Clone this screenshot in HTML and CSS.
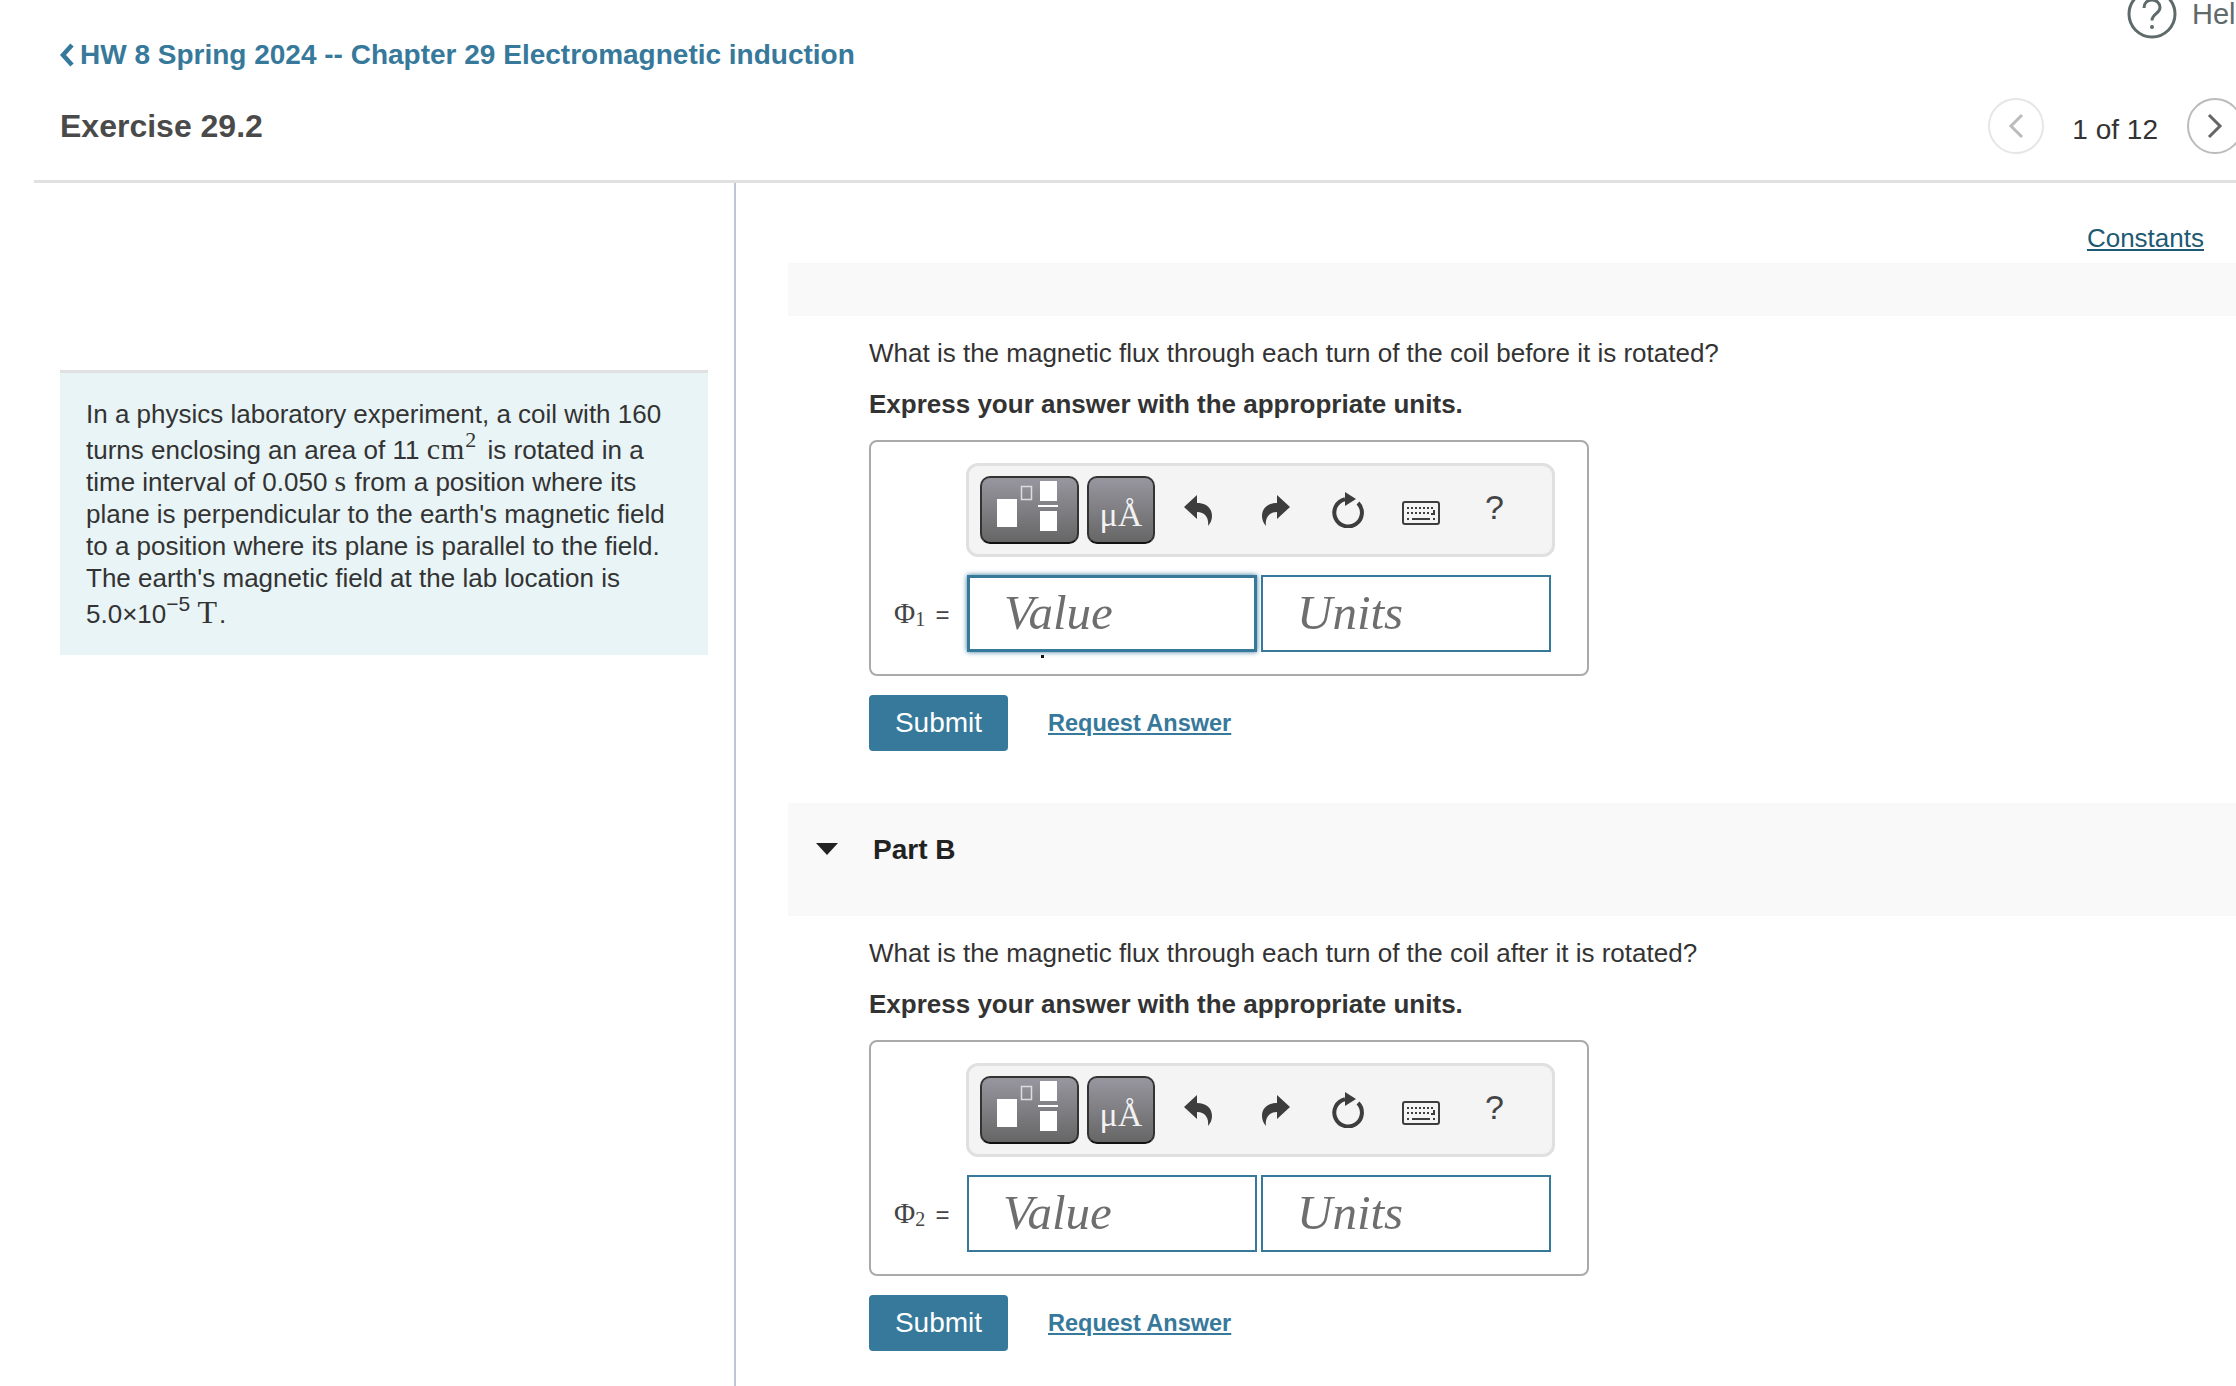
FILE: index.html
```html
<!DOCTYPE html>
<html lang="en">

<head>
  <meta charset="UTF-8">
  <title>Exercise 29.2</title>
  <link rel="stylesheet" href="styles.css">
</head>

<body>
  <div class="help-bar">
    <svg class="help-icon" width="50" height="50" viewBox="0 0 50 50">
      <circle cx="25" cy="25" r="23" fill="none" stroke="#5f6a6a" stroke-width="3" />
      <path d="M17 19c0-5 3.500-8 8-8s8 3 8 7.500c0 6-8 6.500-8 13" fill="none" stroke="#5f6a6a" stroke-width="3" />
      <circle cx="25" cy="38" r="2" fill="#5f6a6a" />
    </svg>
    <span class="help-text">Help</span>
  </div>

  <a class="back-link" href="#">
    <svg width="16" height="24" viewBox="0 0 16 24">
      <polyline points="13,2 4,12 13,22" fill="none" stroke="#37799b" stroke-width="4.500" />
    </svg>HW 8 Spring 2024 -- Chapter 29 Electromagnetic induction
  </a>

  <header class="title-row">
    <h1>Exercise 29.2</h1>
    <nav class="pager">
      <span class="pager-btn off">
        <svg width="16" height="26" viewBox="0 0 16 26"><polyline points="14,2 3,13 14,24" fill="none" stroke="#bbb" stroke-width="3" /></svg>
      </span>
      <span class="pager-count">1 of 12</span>
      <span class="pager-btn">
        <svg width="16" height="26" viewBox="0 0 16 26"><polyline points="2,2 13,13 2,24" fill="none" stroke="#666" stroke-width="3" /></svg>
      </span>
    </nav>
  </header>

  <main class="columns">
    <aside class="left-col">
      <div class="problem">
        In a physics laboratory experiment, a coil with 160 turns enclosing an area of 11 <span class="math unit-cm">cm<sup>2</sup></span> is rotated in a time interval of 0.050 <span class="math">s</span> from a position where its plane is perpendicular to the earth's magnetic field to a position where its plane is parallel to the field. The earth's magnetic field at the lab location is 5.0×10<sup>−5</sup> <span class="math unit-t">T</span>.
      </div>
    </aside>

    <section class="right-col">
      <div class="constants"><a href="#">Constants</a></div>

      <div class="part-band short"></div>
      <div class="part-body">
        <p class="question">What is the magnetic flux through each turn of the coil before it is rotated?</p>
        <p class="instruction">Express your answer with the appropriate units.</p>
        <div class="answer-box">
          <div class="toolbar">
            <button class="tool-btn wide">
              <svg width="76" height="58" viewBox="0 0 76 58">
                <rect x="5" y="18" width="20" height="28" fill="#fff" />
                <rect x="29.500" y="5.500" width="10" height="13" fill="none" stroke="#ddd" stroke-width="1.500" />
                <rect x="48" y="0" width="17" height="20" fill="#fff" />
                <rect x="46" y="24" width="20" height="2" fill="#fff" />
                <rect x="48" y="30" width="17" height="20" fill="#fff" />
              </svg>
            </button>
            <button class="tool-btn narrow">μÅ</button>
            <svg class="icon-undo" width="28" height="31" viewBox="0 0 28 31">
              <path d="M0 12L13 0V8C22 8 28 13 28 21C28 25 26.500 28 24 31C25 24 22 17 13 17V24Z" fill="#3d3d3d" />
            </svg>
            <svg class="icon-redo" width="28" height="31" viewBox="0 0 28 31">
              <path d="M28 12L15 0V8C6 8 0 13 0 21C0 25 1.500 28 4 31C3 24 6 17 15 17V24Z" fill="#3d3d3d" />
            </svg>
            <svg class="icon-reset" width="33" height="36" viewBox="0 0 33 36">
              <path d="M13 7.200A13.800 13.800 0 1 0 26 11" fill="none" stroke="#3d3d3d" stroke-width="4" />
              <path d="M13 0L24 7L13 14Z" fill="#3d3d3d" />
            </svg>
            <svg class="icon-keys" width="38" height="24" viewBox="0 0 38 24">
              <rect x="1" y="1" width="36" height="22" rx="2" fill="none" stroke="#3d3d3d" stroke-width="2" />
              <line x1="5" y1="7" x2="33" y2="7" stroke="#3d3d3d" stroke-width="2" stroke-dasharray="2 2" />
              <line x1="5" y1="12" x2="28" y2="12" stroke="#3d3d3d" stroke-width="2" stroke-dasharray="2 2" />
              <path d="M32 9V13H29" fill="none" stroke="#3d3d3d" stroke-width="2" />
              <line x1="10" y1="18" x2="28" y2="18" stroke="#3d3d3d" stroke-width="2" />
              <rect x="5" y="17" width="2" height="2" fill="#3d3d3d" />
              <rect x="31" y="17" width="2" height="2" fill="#3d3d3d" />
            </svg>
            <span class="tool-help">?</span>
          </div>
          <div class="input-row">
            <span class="flux-label">Φ<sub>1</sub> <span class="eq">=</span></span>
            <div class="field focused">Value</div>
            <div class="field">Units</div>
            <span class="stray-dot"></span>
          </div>
        </div>
        <div class="actions">
          <button class="submit">Submit</button>
          <a class="request" href="#">Request Answer</a>
        </div>
      </div>

      <div class="part-band">
        <span class="caret"></span>
        <h2>Part B</h2>
      </div>
      <div class="part-body">
        <p class="question">What is the magnetic flux through each turn of the coil after it is rotated?</p>
        <p class="instruction">Express your answer with the appropriate units.</p>
        <div class="answer-box">
          <div class="toolbar">
            <button class="tool-btn wide">
              <svg width="76" height="58" viewBox="0 0 76 58">
                <rect x="5" y="18" width="20" height="28" fill="#fff" />
                <rect x="29.500" y="5.500" width="10" height="13" fill="none" stroke="#ddd" stroke-width="1.500" />
                <rect x="48" y="0" width="17" height="20" fill="#fff" />
                <rect x="46" y="24" width="20" height="2" fill="#fff" />
                <rect x="48" y="30" width="17" height="20" fill="#fff" />
              </svg>
            </button>
            <button class="tool-btn narrow">μÅ</button>
            <svg class="icon-undo" width="28" height="31" viewBox="0 0 28 31">
              <path d="M0 12L13 0V8C22 8 28 13 28 21C28 25 26.500 28 24 31C25 24 22 17 13 17V24Z" fill="#3d3d3d" />
            </svg>
            <svg class="icon-redo" width="28" height="31" viewBox="0 0 28 31">
              <path d="M28 12L15 0V8C6 8 0 13 0 21C0 25 1.500 28 4 31C3 24 6 17 15 17V24Z" fill="#3d3d3d" />
            </svg>
            <svg class="icon-reset" width="33" height="36" viewBox="0 0 33 36">
              <path d="M13 7.200A13.800 13.800 0 1 0 26 11" fill="none" stroke="#3d3d3d" stroke-width="4" />
              <path d="M13 0L24 7L13 14Z" fill="#3d3d3d" />
            </svg>
            <svg class="icon-keys" width="38" height="24" viewBox="0 0 38 24">
              <rect x="1" y="1" width="36" height="22" rx="2" fill="none" stroke="#3d3d3d" stroke-width="2" />
              <line x1="5" y1="7" x2="33" y2="7" stroke="#3d3d3d" stroke-width="2" stroke-dasharray="2 2" />
              <line x1="5" y1="12" x2="28" y2="12" stroke="#3d3d3d" stroke-width="2" stroke-dasharray="2 2" />
              <path d="M32 9V13H29" fill="none" stroke="#3d3d3d" stroke-width="2" />
              <line x1="10" y1="18" x2="28" y2="18" stroke="#3d3d3d" stroke-width="2" />
              <rect x="5" y="17" width="2" height="2" fill="#3d3d3d" />
              <rect x="31" y="17" width="2" height="2" fill="#3d3d3d" />
            </svg>
            <span class="tool-help">?</span>
          </div>
          <div class="input-row">
            <span class="flux-label">Φ<sub>2</sub> <span class="eq">=</span></span>
            <div class="field">Value</div>
            <div class="field">Units</div>
          </div>
        </div>
        <div class="actions">
          <button class="submit">Submit</button>
          <a class="request" href="#">Request Answer</a>
        </div>
      </div>
    </section>
  </main>
</body>

</html>
```

FILE: styles.css
```css
html,
body {
  height: 1386px;
  overflow: hidden;
}

body {
  margin: 0;
  background: #fff;
  color: #333;
  font-family: "Liberation Sans", Arial, sans-serif;
}

a {
  color: #37799b;
}

.help-bar {
  display: flex;
  justify-content: flex-end;
  align-items: flex-end;
  height: 39px;
  margin-right: -16px;
}

.help-icon {
  flex: none;
}

.help-text {
  width: 60px;
  margin-left: 15px;
  margin-bottom: 8px;
  color: #5f6a6a;
  font-size: 29px;
  line-height: 34px;
}

.back-link {
  display: flex;
  align-items: center;
  height: 32px;
  margin-left: 59px;
  font-size: 28px;
  font-weight: bold;
  text-decoration: none;
  white-space: nowrap;
}

.back-link svg {
  flex: none;
  margin-right: 5px;
}

.title-row {
  display: flex;
  justify-content: space-between;
  align-items: center;
  height: 82px;
  margin-left: 34px;
  padding: 14px 0 13px 26px;
  border-bottom: 3px solid #e0e0e0;
}

.title-row h1 {
  margin: 0;
  color: #4a4a4a;
  font-size: 32px;
}

.pager {
  display: flex;
  align-items: center;
  margin-right: -7px;
}

.pager-btn {
  display: flex;
  justify-content: center;
  align-items: center;
  width: 52px;
  height: 52px;
  border: 2px solid #bbb;
  border-radius: 50%;
}

.pager-btn.off {
  border-color: #e6e6e6;
}

.pager-count {
  margin: 7px 29px 0 28px;
  font-size: 28px;
}

.columns {
  display: flex;
  height: 1204px;
}

.left-col {
  flex: none;
  width: 648px;
  padding: 187px 26px 0 60px;
  border-right: 2px solid #bcc8d6;
}

.problem {
  padding: 25px 26px 25px;
  background: #e8f4f6;
  border-top: 3px solid #e0e0e0;
  font-size: 26px;
  line-height: 32px;
}

.problem sup {
  font-size: 21px;
  line-height: 20px;
  vertical-align: 12px;
}

.math {
  font-family: "Liberation Serif", "Times New Roman", serif;
  font-size: 30px;
  line-height: 20px;
  letter-spacing: 1px;
}

.math sup {
  font-size: 22px;
  letter-spacing: 0;
}

.unit-cm {
  margin-right: 4px;
}

.unit-t {
  font-size: 32px;
  letter-spacing: 2px;
}

.right-col {
  flex: 1;
  min-width: 0;
  padding-left: 52px;
}

.constants {
  height: 80px;
  box-sizing: border-box;
  padding: 38px 32px 0 0;
  text-align: right;
  font-size: 26px;
  line-height: 34px;
}

.constants a {
  color: #1e5a73;
}

.part-band {
  display: flex;
  align-items: flex-start;
  height: 113px;
  background: #f9f9f9;
}

.part-band.short {
  height: 53px;
}

.caret {
  width: 0;
  height: 0;
  margin: 40px 0 0 28px;
  border-left: 11px solid transparent;
  border-right: 11px solid transparent;
  border-top: 12px solid #222;
}

.part-band h2 {
  margin: 30px 0 0 35px;
  color: #222;
  font-size: 28px;
  line-height: 34px;
}

.part-body {
  padding: 21px 0 52px 81px;
}

.question,
.instruction {
  margin: 0 0 19px;
  font-size: 26px;
  line-height: 32px;
  white-space: nowrap;
}

.instruction {
  margin-bottom: 20px;
  font-weight: bold;
}

.answer-box {
  width: 716px;
  height: 232px;
  border: 2px solid #aaa;
  border-radius: 8px;
}

.toolbar {
  display: flex;
  align-items: center;
  width: 572px;
  height: 88px;
  margin: 21px 0 0 95px;
  padding-left: 11px;
  background: #f4f4f4;
  border: 3px solid #e0e0e0;
  border-radius: 12px;
}

.tool-btn {
  display: flex;
  justify-content: center;
  align-items: center;
  height: 68px;
  padding: 0;
  background: linear-gradient(#98969f, #666);
  border: 2px solid #333;
  border-bottom-color: #111;
  border-radius: 10px;
  color: #f2f2f2;
  font-family: "Liberation Serif", "Times New Roman", serif;
}

.tool-btn.wide {
  width: 99px;
}

.tool-btn.narrow {
  width: 68px;
  margin-left: 8px;
  padding-top: 10px;
  font-size: 34px;
  line-height: 1;
}

.icon-undo {
  margin-left: 29px;
  flex: none;
}

.icon-redo {
  margin-left: 50px;
  flex: none;
}

.icon-reset {
  margin-left: 42px;
  flex: none;
}

.icon-keys {
  margin: 5px 0 0 37px;
  flex: none;
}

.tool-help {
  margin-left: 45px;
  margin-top: -6px;
  font-size: 34px;
  color: #444;
}

.input-row {
  position: relative;
  display: flex;
  gap: 4px;
  align-items: center;
  margin-top: 18px;
}

.flux-label {
  width: 96px;
  margin-right: -4px;
  padding-left: 23px;
  box-sizing: border-box;
  font-family: "Liberation Serif", "Times New Roman", serif;
  font-size: 29px;
  color: #444;
  white-space: nowrap;
}

.flux-label sub {
  font-size: 20px;
  line-height: 0;
  vertical-align: -3px;
}

.eq {
  font-family: "Liberation Sans", Arial, sans-serif;
  font-size: 24px;
  margin-left: 3px;
}

.field {
  width: 252px;
  height: 73px;
  padding-left: 34px;
  border: 2px solid #37799b;
  color: #6e6e6e;
  font-family: "Liberation Serif", "Times New Roman", serif;
  font-size: 49px;
  font-style: italic;
  line-height: 71px;
}

.field.focused {
  width: 250px;
  height: 71px;
  line-height: 69px;
  border-width: 3px;
  box-shadow: 0 0 5px #37799b;
}

.stray-dot {
  position: absolute;
  left: 170px;
  top: 80px;
  width: 3px;
  height: 3px;
  background: #111;
}

.actions {
  display: flex;
  align-items: center;
  margin-top: 19px;
}

.submit {
  width: 139px;
  height: 56px;
  padding: 0;
  background: #37799b;
  border: none;
  border-radius: 4px;
  color: #fff;
  font-family: "Liberation Sans", Arial, sans-serif;
  font-size: 28px;
}

.request {
  margin-left: 40px;
  font-size: 23.500px;
  font-weight: bold;
}
```
